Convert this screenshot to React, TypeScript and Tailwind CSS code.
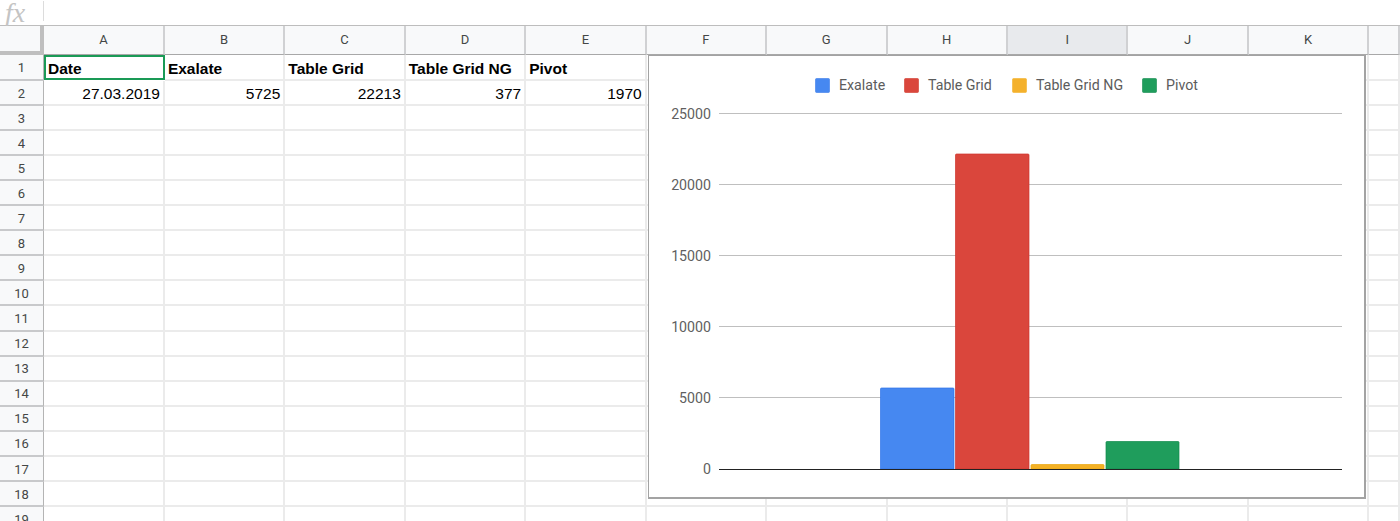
const cols = ["A", "B", "C", "D", "E", "F", "G", "H", "I", "J", "K", ""];
const rows = Array.from({ length: 19 }, (_, i) => i + 1);
const data: Record<number, string[]> = {
  1: ["Date", "Exalate", "Table Grid", "Table Grid NG", "Pivot"],
  2: ["27.03.2019", "5725", "22213", "377", "1970"],
};
const ticks = [
  ["25000", 113.5],
  ["20000", 184.5],
  ["15000", 255.5],
  ["10000", 326.5],
  ["5000", 397.5],
] as const;
const legend = [
  ["Exalate", 815, "#4688f1", "#3b7bea"],
  ["Table Grid", 904, "#da463c", "#d23a2e"],
  ["Table Grid NG", 1012, "#f4b12c", "#f4b12c"],
  ["Pivot", 1142, "#1f9d5c", "#138a4e"],
] as const;
const bars = [
  [880.5, 388, 73.5, "#4688f1", "#2f74e8"],
  [955.5, 154, 73.5, "#da463c", "#cf352c"],
  [1031, 464.5, 73, "#f4b125", "#eaa60d"],
  [1106, 441.5, 73, "#1f9d5c", "#0f8a4a"],
] as const;

function Chart() {
  return (
    <div className="absolute left-[648px] top-[55px] h-[444px] w-[718px] border-2 border-l border-t border-[#a3a3a3] bg-white">
      <svg viewBox="649 56 715 441" className="block h-[441px] w-[715px]" style={{ fontFamily: "Roboto, sans-serif" }}>
        {ticks.map(([label, y]) => (
          <g key={label}>
            <line x1={719} x2={1342} y1={y} y2={y} stroke="#bfbfbf" strokeWidth={1} />
            <text x={711} y={y + 5} textAnchor="end" fontSize={14.2} fill="#5f5f5f">{label}</text>
          </g>
        ))}
        <text x={711} y={474} textAnchor="end" fontSize={14.2} fill="#5f5f5f">0</text>
        {legend.map(([label, x, fill, stroke]) => (
          <g key={label}>
            <rect x={x + 0.5} y={78.5} width={14} height={14} rx={1} fill={fill} stroke={stroke} strokeWidth={0.6} />
            <text x={x + 24} y={90} fontSize={14.2} fill="#5c5c5c">{label}</text>
          </g>
        ))}
        {bars.map(([x, y, w, fill, stroke]) => (
          <path key={x} d={`M${x} 469V${y + 1}q0 -1 1 -1H${x + w - 1}q1 0 1 1V469Z`} fill={fill} stroke={stroke} strokeWidth={0.7} />
        ))}
        <line x1={719} x2={1342} y1={469.5} y2={469.5} stroke="#222222" strokeWidth={1} />
      </svg>
    </div>
  );
}

export default function App() {
  return (
    <div className="relative h-[521px] w-[1400px] overflow-hidden bg-white font-['Liberation_Sans',sans-serif]">
      <div className="flex h-[26px] items-start border-b border-[#bdbdbd] bg-white">
        <span className="ml-[5px] w-[38px] font-['Liberation_Serif',serif] text-[28px] italic leading-[25px] text-[#c4c4c4]">fx</span>
        <span className="mt-px h-[20px] w-px bg-[#dcdcdc]" />
      </div>
      <div className="grid grid-cols-[44px_120.9px_repeat(10,120.45px)_1fr]">
        <div className="h-[29px] border-b-4 border-r-4 border-[#bfbfbf] bg-[#f8f9fa]" />
        {cols.map((c) => (
          <div
            key={c || "rest"}
            className={`flex h-[29px] items-center justify-center border-b border-r-2 border-b-[#a8a8a8] border-r-[#d0d1d3] font-['Roboto',sans-serif] text-[13px] text-[#444746] ${c === "I" ? "bg-[#e8eaed]" : "bg-[#f8f9fa]"}`}
          >
            {c}
          </div>
        ))}
        {rows.map((r) => (
          <div key={r} className="contents">
            <div className={`flex items-center justify-center border-b-2 border-r border-b-[#c8c9cb] border-r-[#b4b4b4] bg-[#f8f9fa] pt-[2px] font-['Roboto',sans-serif] text-[13px] text-[#444746] ${r === 1 ? "h-[26.06px]" : "h-[25.06px]"}`}>
              {r}
            </div>
            {cols.map((c, i) => {
              const text = data[r]?.[i];
              const selected = r === 1 && i === 0;
              return (
                <div
                  key={c || "rest"}
                  className={`flex items-center overflow-visible whitespace-nowrap pt-[3px] text-[15.5px] text-black ${r === 1 ? "h-[26.06px] font-bold" : "h-[25.06px] justify-end"} ${selected ? "mb-px !h-[25px] border-2 border-[#1a9a56] pl-[2px] pr-[2px]" : "border-b-2 border-r-2 border-[#ebebeb] pl-[3px] pr-[3px]"}`}
                >
                  {text}
                </div>
              );
            })}
          </div>
        ))}
      </div>
      <Chart />
    </div>
  );
}
